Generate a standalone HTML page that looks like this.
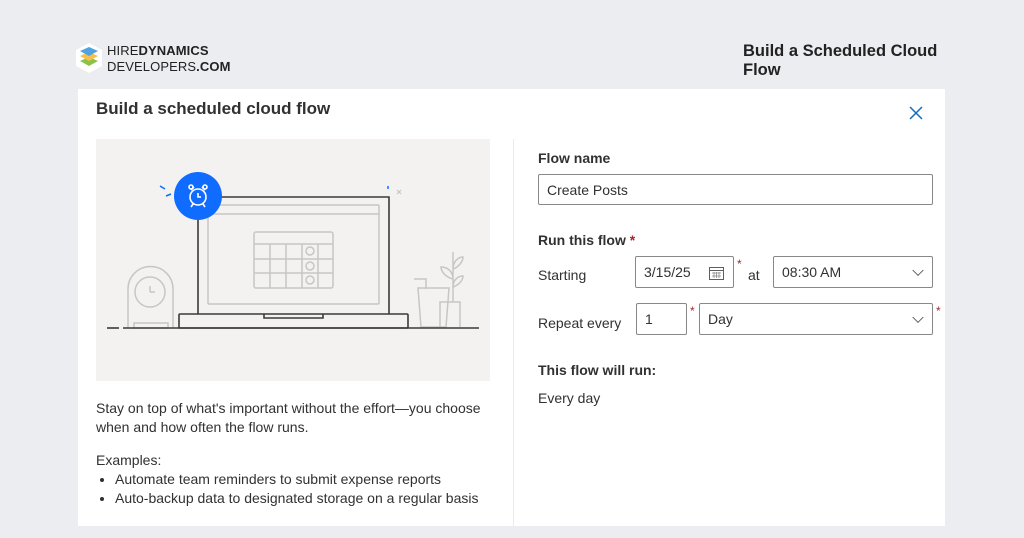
<!DOCTYPE html>
<html><head><style>
*{margin:0;padding:0;box-sizing:border-box}
body{width:1024px;height:538px;background:#ecedf1;font-family:"Liberation Sans",sans-serif;position:relative;overflow:hidden;color:#323130}
.abs{position:absolute}
.card{left:78px;top:89px;width:867px;height:437px;background:#fff}
.inp{position:absolute;border:1px solid #8a8886;border-radius:2px;background:#fff;font-size:14px;padding-left:8px;display:flex;align-items:center;color:#323130}
.req{position:absolute;color:#a4262c;font-size:12px}
.lbl{position:absolute;font-size:14px}
.b{font-weight:bold}
.chev{position:absolute;right:10px;top:50%;width:8px;height:8px;border-right:1px solid #605e5c;border-bottom:1px solid #605e5c;transform:translateY(-70%) rotate(45deg)}
</style></head><body>
<svg class="abs" style="left:74px;top:42px" width="30" height="32" viewBox="0 0 30 32">
<polygon points="15,1 28,8 28,24 15,31 2,24 2,8" fill="#fff"/>
<polygon points="15,15 24,19 15,24 6,19" fill="#8bc34a"/>
<polygon points="15,10 24,14 15,19 6,14" fill="#f7c04a"/>
<polygon points="15,5 24,9 15,14 6,9" fill="#4fa3e0"/>
</svg>
<div class="abs" style="left:107px;top:43px;font-size:13px;line-height:16px;color:#222;letter-spacing:0.1px">HIRE<b>DYNAMICS</b><br>DEVELOPERS<b>.COM</b></div>
<div class="abs b" style="left:743px;top:42px;font-size:16.5px;line-height:19px;color:#222">Build a Scheduled Cloud<br>Flow</div>
<div class="abs card"></div>
<div class="abs" style="left:96px;top:99px;font-size:17px;color:#323130;font-weight:600">Build a scheduled cloud flow</div>
<svg class="abs" style="left:909px;top:106px" width="14" height="14"><path d="M1 1L13 13M13 1L1 13" stroke="#0f6cbd" stroke-width="1.5"/></svg>
<div class="abs" style="left:513px;top:139px;width:1px;height:387px;background:#edebe9"></div>
<svg class="abs" style="left:96px;top:139px" width="394" height="242" viewBox="0 0 394 242">
<rect width="394" height="242" fill="#f3f2f1"/>
<g fill="none" stroke="#c8c6c4" stroke-width="1.5">
<rect x="112" y="66" width="171" height="99" rx="1"/><line x1="112" y1="75" x2="283" y2="75"/>
<rect x="158" y="93" width="79" height="56" rx="2"/>
<line x1="158" y1="105" x2="237" y2="105"/><line x1="158" y1="120" x2="237" y2="120"/><line x1="158" y1="134" x2="237" y2="134"/>
<line x1="174" y1="105" x2="174" y2="149"/><line x1="190" y1="105" x2="190" y2="149"/><line x1="206" y1="105" x2="206" y2="149"/><line x1="222" y1="105" x2="222" y2="149"/>
<circle cx="214" cy="112" r="4"/><circle cx="214" cy="127" r="4"/><circle cx="214" cy="141" r="4"/>
<path d="M32 189V150a22 22 0 0 1 45 0v39"/><circle cx="54" cy="153" r="15"/><path d="M54 153v-6M54 153h5"/><rect x="38" y="184" width="34" height="5"/>
<path d="M322 149h31l-3 39h-25z"/><path d="M344 188v-25h20v25M357 163v-50M357 140c-8-2-12-8-12-12 8 0 12 6 12 12M357 130c6-2 10-8 10-12-6 0-10 6-10 12M357 148c6-2 10-7 10-11-6 0-10 5-10 11M330 150v-10h-12"/>
</g>
<g fill="none" stroke="#3b3a39" stroke-width="1.6">
<path d="M102 175V58h191v117"/><rect x="83" y="175" width="229" height="14" rx="1"/><path d="M168 175v4h59v-4"/>
<line x1="27" y1="189" x2="383" y2="189"/><line x1="11" y1="189" x2="23" y2="189"/>
</g>
<circle cx="102" cy="57" r="24" fill="#0f6cff"/>
<g fill="none" stroke="#fff" stroke-width="1.6"><circle cx="102" cy="58" r="8"/><path d="M102 54v4h3M95 51l3-3M109 51l-3-3M97 65l-2 3M107 65l2 3"/><circle cx="95" cy="48" r="2"/><circle cx="109" cy="48" r="2"/></g>
<path d="M69 50l-5-3M75 55l-5 2M292 47v3" stroke="#0f6cff" stroke-width="1.5"/>
<path d="M301 51l4 4M305 51l-4 4" stroke="#c8c6c4" stroke-width="1.2"/>
</svg>
<div class="abs" style="left:96px;top:399px;font-size:14px;line-height:19px">Stay on top of what's important without the effort—you choose<br>when and how often the flow runs.</div>
<div class="abs" style="left:96px;top:451px;font-size:14px;line-height:19px">Examples:</div>
<ul class="abs" style="left:115px;top:470px;font-size:14px;line-height:19px;list-style:disc">
<li>Automate team reminders to submit expense reports</li>
<li>Auto-backup data to designated storage on a regular basis</li></ul>
<div class="lbl b" style="left:538px;top:150px">Flow name</div>
<div class="inp" style="left:538px;top:174px;width:395px;height:31px">Create Posts</div>
<div class="lbl b" style="left:538px;top:232px">Run this flow <span style="color:#a4262c">*</span></div>
<div class="lbl" style="left:538px;top:267px">Starting</div>
<div class="inp" style="left:635px;top:256px;width:99px;height:32px">3/15/25
<svg style="position:absolute;right:9px;top:9px" width="15" height="14"><rect x="0.5" y="1.5" width="14" height="12" fill="none" stroke="#605e5c"/><line x1="0" y1="4.5" x2="15" y2="4.5" stroke="#605e5c"/><path d="M3 7h9M3 10h9M5 6v6M7.5 6v6M10 6v6" stroke="#8a8886" stroke-width="0.8"/></svg></div>
<div class="req" style="left:737px;top:257px">*</div>
<div class="lbl" style="left:748px;top:267px">at</div>
<div class="inp" style="left:773px;top:256px;width:160px;height:32px">08:30 AM<span class="chev"></span></div>
<div class="lbl" style="left:538px;top:315px">Repeat every</div>
<div class="inp" style="left:636px;top:303px;width:51px;height:32px">1</div>
<div class="req" style="left:690px;top:304px">*</div>
<div class="inp" style="left:699px;top:303px;width:234px;height:32px">Day<span class="chev"></span></div>
<div class="req" style="left:936px;top:304px">*</div>
<div class="lbl b" style="left:538px;top:362px">This flow will run:</div>
<div class="lbl" style="left:538px;top:390px">Every day</div>
</body></html>
